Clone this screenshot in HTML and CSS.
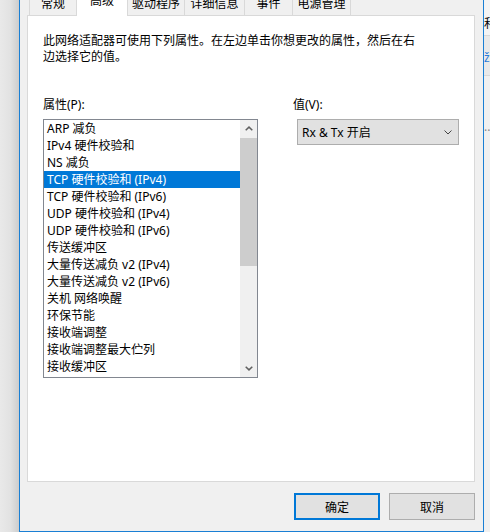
FILE: index.html
```html
<!DOCTYPE html>
<html lang="zh-CN">
<head>
  <meta charset="UTF-8" />
  <title>高级</title>
  <link rel="stylesheet" href="styles.css">
</head>
<body>
  <div class="desk-left"></div>

  <div class="window">
    <!-- tabs -->
    <div class="tabs">
      <div class="tab t1">常规</div>
      <div class="tab t2 active">高级</div>
      <div class="tab t3">驱动程序</div>
      <div class="tab t4">详细信息</div>
      <div class="tab t5">事件</div>
      <div class="tab t6">电源管理</div>
    </div>

    <!-- tab page -->
    <div class="panel">
      <p class="intro">此网络适配器可使用下列属性。在左边单击你想更改的属性，然后在右<br>边选择它的值。</p>

      <div class="props">
        <div class="col-left">
          <div class="label">属性(P):</div>
          <div class="listbox">
            <ul class="items">
              <li>ARP 减负</li>
              <li>IPv4 硬件校验和</li>
              <li>NS 减负</li>
              <li class="selected">TCP 硬件校验和 (IPv4)</li>
              <li>TCP 硬件校验和 (IPv6)</li>
              <li>UDP 硬件校验和 (IPv4)</li>
              <li>UDP 硬件校验和 (IPv6)</li>
              <li>传送缓冲区</li>
              <li>大量传送减负 v2 (IPv4)</li>
              <li>大量传送减负 v2 (IPv6)</li>
              <li>关机 网络唤醒</li>
              <li>环保节能</li>
              <li>接收端调整</li>
              <li>接收端调整最大伫列</li>
              <li>接收缓冲区</li>
            </ul>
            <div class="scrollbar">
              <div class="sb-arrow">
                <svg width="8" height="5" viewBox="0 0 8 5"><path d="M0.7 4.3 L4 1.1 L7.3 4.3" fill="none" stroke="#606060" stroke-width="1.5"/></svg>
              </div>
              <div class="sb-thumb"></div>
              <div class="sb-track"></div>
              <div class="sb-arrow">
                <svg width="8" height="5" viewBox="0 0 8 5"><path d="M0.7 0.7 L4 3.9 L7.3 0.7" fill="none" stroke="#606060" stroke-width="1.5"/></svg>
              </div>
            </div>
          </div>
        </div>

        <div class="col-right">
          <div class="label">值(V):</div>
          <div class="select">
            <span>Rx &amp; Tx 开启</span>
            <svg width="8" height="5" viewBox="0 0 8 5"><path d="M0.5 0.5 L4 4 L7.5 0.5" fill="none" stroke="#444" stroke-width="1"/></svg>
          </div>
        </div>
      </div>
    </div>

    <!-- dialog buttons -->
    <div class="buttons">
      <button class="btn default">确定</button>
      <button class="btn">取消</button>
    </div>
  </div>

  <div class="desk-right">
    <div class="dr-top"><span>和</span></div>
    <div class="dr-mid"><span>ž</span></div>
    <div class="dr-rest"><span>..</span></div>
  </div>
</body>
</html>
```

FILE: styles.css
```css
:root {
  --face: #f0f0f0;
  --edge: #d9d9d9;
  --accent: #0078d7;
  --frame: #1a7fd4;
  --btn: #e1e1e1;
  --btn-edge: #adadad;
}

* {
  box-sizing: border-box;
}

html, body {
  margin: 0;
  height: 532px;
}

body {
  display: flex;
  width: 490px;
  overflow: hidden;
  font-family: "Noto Sans", "Noto Sans CJK SC", sans-serif;
  font-size: 12px;
  color: #000;
  background: var(--face);
}

.desk-left {
  width: 19px;
  background: linear-gradient(to right, #e9e9e9, #e2e2e2 55%, #cdcdcd);
}

.window {
  width: 465px;
  height: 532px;
  display: flex;
  flex-direction: column;
  padding: 0 8px 11px 7px;
  background: var(--face);
  border-left: 1px solid var(--frame);
  border-right: 1px solid var(--frame);
  border-bottom: 1px solid var(--frame);
}

/* tabs */
.tabs {
  display: flex;
  align-items: flex-end;
  height: 15px;
  margin-left: 2px;
}

.tab {
  height: 26px;
  padding-bottom: 3px;
  display: flex;
  align-items: flex-end;
  justify-content: center;
  line-height: 16px;
  background: var(--face);
  border-top: 1px solid var(--edge);
  border-right: 1px solid var(--edge);
}

.tab.t1 { width: 48px; border-left: 1px solid var(--edge); }
.tab.t2 { width: 51px; }
.tab.t3 { width: 57px; }
.tab.t4 { width: 60px; }
.tab.t5 { width: 48px; }
.tab.t6 { width: 58px; }

.tab.active {
  position: relative;
  z-index: 1;
  height: 28px;
  margin-bottom: -1px;
  padding-bottom: 7px;
  background: #fff;
}

/* tab page */
.panel {
  height: 467px;
  padding: 17px 15px 0 15px;
  background: #fff;
  border: 1px solid var(--edge);
}

.intro {
  margin: 0;
  line-height: 16px;
}

.props {
  display: flex;
  margin-top: 32px;
}

.label {
  line-height: 16px;
  margin-bottom: 6px;
}

.col-left {
  width: 217px;
}

.col-right {
  margin-left: 35px;
}

.listbox {
  display: flex;
  height: 259px;
  border: 1px solid #828790;
}

.items {
  flex: 1;
  margin: 0;
  padding: 0;
  list-style: none;
  overflow: hidden;
}

.items li {
  height: 17px;
  line-height: 17px;
  padding-left: 3px;
  white-space: nowrap;
}

.items li.selected {
  background: var(--accent);
  color: #fff;
}

.scrollbar {
  width: 17px;
  display: flex;
  flex-direction: column;
  background: var(--face);
}

.sb-arrow {
  height: 17px;
  display: flex;
  align-items: center;
  justify-content: center;
}

.sb-thumb {
  height: 128px;
  margin-top: 1px;
  background: #cdcdcd;
}

.sb-track {
  flex: 1;
}

.select {
  width: 162px;
  height: 26px;
  margin-left: 4px;
  display: flex;
  align-items: center;
  justify-content: space-between;
  padding: 0 6px 0 4px;
  background: var(--btn);
  border: 1px solid var(--btn-edge);
}

/* dialog buttons */
.buttons {
  display: flex;
  justify-content: flex-end;
  gap: 9px;
  margin-top: 11px;
  padding-right: 0;
}

.btn {
  width: 86px;
  height: 27px;
  padding: 0;
  font-family: inherit;
  font-size: 12px;
  color: #000;
  background: var(--btn);
  border: 1px solid var(--btn-edge);
}

.btn.default {
  border: 2px solid var(--accent);
}

/* window behind, on the right */
.desk-right {
  width: 6px;
  display: flex;
  flex-direction: column;
  overflow: hidden;
}

.dr-top {
  height: 36px;
  padding-top: 17px;
  line-height: 14px;
  background: #f4f4f4;
  border-bottom: 1px solid #d8d8d8;
}

.dr-mid {
  height: 40px;
  padding-top: 15px;
  line-height: 14px;
  color: #2a7bd8;
  background: #e9e9e9;
  border-bottom: 1px solid #d8d8d8;
}

.dr-rest {
  flex: 1;
  padding-top: 44px;
  line-height: 14px;
  color: #888;
}
```
